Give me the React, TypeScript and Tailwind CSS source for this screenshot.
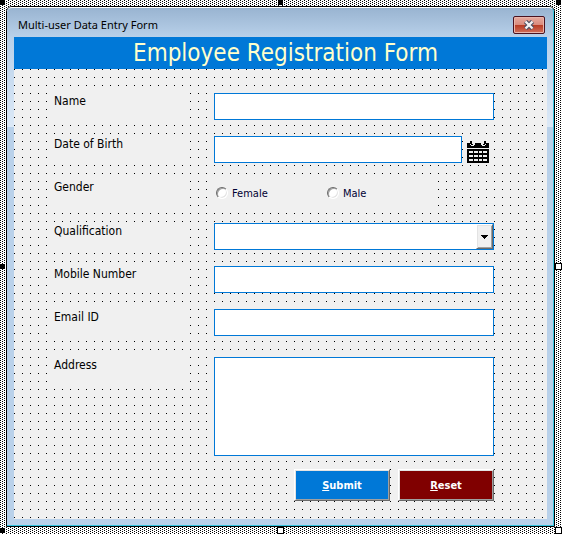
import { useState } from "react";
import type { ReactNode } from "react";

const fieldClass =
  "block w-full h-[27px] rounded-none border border-[#0078d7] bg-white px-1 text-xs text-black outline-none";

const hatchClass =
  "bg-white bg-[image:conic-gradient(at_1px_1px,transparent_270deg,#000_0),conic-gradient(at_1px_1px,transparent_270deg,#000_0)] bg-[size:4px_2px,4px_2px] bg-[position:0_0,2px_1px]";

const dotGridClass =
  "bg-[#f0f0f0] bg-[image:conic-gradient(at_1px_1px,transparent_270deg,#000_0)] bg-[size:8px_8px]";

const bevelClass =
  "border border-t-white border-l-white border-r-[#696969] border-b-[#696969] shadow-[inset_1px_1px_0_#e3e3e3,inset_-1px_-1px_0_#a0a0a0]";

function Label({ htmlFor, children }: { htmlFor: string; children: ReactNode }) {
  return (
    <label htmlFor={htmlFor} className="block h-[27px] bg-[#f0f0f0] text-xs leading-4 text-black">
      {children}
    </label>
  );
}

function CalendarIcon() {
  return (
    <svg width="22" height="22" viewBox="0 0 22 22" shapeRendering="crispEdges" aria-hidden="true">
      <path fill="#000" d="M0 2h22v5H0z" />
      <path fill="#f0f0f0" d="M3 1h5v3H7v1H4V4H3zM14 1h5v3h-1v1h-3V4h-1z" />
      <path fill="#000" d="M3 0h2v3h1v1H4V3H3zM17 0h2v3h-1v1h-2V3h1z" />
      <path
        fill="#000"
        fillRule="evenodd"
        d="M0 8h22v14H0zM2 10v2h4v-2zM7 10v2h4v-2zM12 10v2h3v-2zM16 10v2h4v-2zM2 14v2h4v-2zM7 14v2h4v-2zM12 14v2h3v-2zM16 14v2h4v-2zM2 18v2h4v-2zM7 18v2h4v-2zM12 18v2h3v-2zM16 18v2h4v-2z"
      />
    </svg>
  );
}

function Radio({ label, value, checked, onChange }: {
  label: string;
  value: string;
  checked: boolean;
  onChange: (v: string) => void;
}) {
  return (
    <label className="flex w-28 items-center gap-1 text-[11px] leading-4 text-[#000033]">
      <input
        type="radio"
        name="gender"
        value={value}
        checked={checked}
        onChange={() => onChange(value)}
        className="mb-0.5 size-3 appearance-none rounded-full border border-t-[#696969] border-l-[#696969] border-r-white border-b-white bg-white shadow-[inset_1px_1px_0_#a0a0a0,inset_-1px_-1px_0_#e3e3e3] checked:bg-black"
      />
      {label}
    </label>
  );
}

// sizing handles around the form, filled = locked, hollow = draggable
function Handles() {
  const filled = "absolute size-[5px] bg-black";
  const hollow = "absolute size-[7px] border border-black bg-white";
  return (
    <>
      <span className={`${filled} top-0 left-0`} />
      <span className={`${filled} top-0 left-1/2 -ml-[3px]`} />
      <span className={`${filled} top-0 right-px`} />
      <span className={`${filled} top-1/2 left-0 -mt-[3px]`} />
      <span className={`${filled} bottom-px left-0`} />
      <span className={`${hollow} top-1/2 right-0 -mt-1`} />
      <span className={`${hollow} bottom-0 left-1/2 -ml-1`} />
      <span className={`${hollow} right-0 bottom-0`} />
    </>
  );
}

export default function App() {
  const [gender, setGender] = useState("");

  return (
    <div className="bg-white pr-[3px] font-['DejaVu_Sans_Condensed','DejaVu_Sans',sans-serif]">
      <div className={`relative pt-1.5 pr-[7px] pb-[7px] pl-1.5 ${hatchClass}`}>
        <Handles />

        <div className="rounded-t-md border border-black bg-[#b9d1ea]">
          <div className="rounded-t-[5px] border-t border-r border-b border-t-white border-r-[#35c5e0] border-b-[#35c5e0] bg-[linear-gradient(#99b4d1,#b9d1ea_30px,#dce9f7_119px,#b9d1ea_119px)] pr-1.5 pb-[6px] pl-[7px]">
            <header className="flex h-[29px] items-center justify-between pl-1">
              <span className="pt-1.5 font-['Noto_Sans',sans-serif] text-[11px] text-black">
                Multi-user Data Entry Form
              </span>
              <button
                type="button"
                aria-label="Close"
                className="mt-1 mr-0.5 flex h-[18px] w-8 items-center justify-center rounded-xs border border-[#4a1220] bg-[linear-gradient(#e6aa9f,#d98a7c_50%,#b83a22_50%,#d0705c)] shadow-[inset_0_0_0_1px_#e9b5ab]"
              >
                <svg width="12" height="10" viewBox="0 0 12 10" aria-hidden="true">
                  <path d="M2.5 1.5l7 7M9.5 1.5l-7 7" stroke="#4b4f63" strokeWidth="4.5" fill="none" />
                  <path d="M2.5 1.5l7 7M9.5 1.5l-7 7" stroke="#f4f4f4" strokeWidth="2.4" fill="none" />
                </svg>
              </button>
            </header>

            <h1 className="h-8 bg-[#0078d7] pl-2.5 text-center text-2xl leading-8 text-[#ffffcc]">
              Employee Registration Form
            </h1>

            <form
              onSubmit={(e) => e.preventDefault()}
              onReset={() => setGender("")}
              className={`pt-6 pr-[53px] pb-[18px] pl-10 ${dotGridClass}`}
            >
              <div className="grid grid-cols-[136px_1fr] gap-x-6 gap-y-4">
                <Label htmlFor="name">Name</Label>
                <input id="name" type="text" className={fieldClass} />

                <Label htmlFor="dob">Date of Birth</Label>
                <div className="flex items-end gap-[5px] pr-[5px]">
                  <input id="dob" type="text" className={fieldClass} />
                  <button type="button" aria-label="Pick a date" className="shrink-0 bg-[#f0f0f0]">
                    <CalendarIcon />
                  </button>
                </div>

                <Label htmlFor="gender">Gender</Label>
                <div id="gender" role="radiogroup" aria-label="Gender" className="flex h-7 w-56 items-center bg-[#f0f0f0] pt-0.5 pl-0.5">
                  <Radio label="Female" value="female" checked={gender === "female"} onChange={setGender} />
                  <Radio label="Male" value="male" checked={gender === "male"} onChange={setGender} />
                </div>

                <Label htmlFor="qualification">Qualification</Label>
                <div className="relative">
                  <select id="qualification" defaultValue="" className={`${fieldClass} appearance-none`}>
                    <option value=""></option>
                  </select>
                  <span className={`pointer-events-none absolute inset-y-px right-px flex w-[17px] items-center justify-center bg-[#f0f0f0] ${bevelClass}`}>
                    <svg width="7" height="4" viewBox="0 0 7 4" shapeRendering="crispEdges" aria-hidden="true">
                      <path d="M0 0h7v1H6v1H5v1H4v1H3V3H2V2H1V1H0z" />
                    </svg>
                  </span>
                </div>

                <Label htmlFor="mobile">Mobile Number</Label>
                <input id="mobile" type="text" className={fieldClass} />

                <Label htmlFor="email">Email ID</Label>
                <input id="email" type="text" className={fieldClass} />
              </div>

              <div className="mt-[21px] grid grid-cols-[136px_1fr] gap-x-6">
                <Label htmlFor="address">Address</Label>
                <textarea
                  id="address"
                  className="block h-[99px] w-full resize-none border border-[#0078d7] bg-white px-1 text-xs outline-none"
                />
              </div>

              <div className="mt-[13px] flex justify-end gap-2">
                <button type="submit" className={`h-8 w-24 bg-[#0078d7] pt-0.5 text-[11px] font-bold text-white ${bevelClass}`}>
                  <span className="underline">S</span>ubmit
                </button>
                <button type="reset" className={`h-8 w-24 bg-[#800000] pt-0.5 text-[11px] font-bold text-white ${bevelClass}`}>
                  <span className="underline">R</span>eset
                </button>
              </div>
            </form>
          </div>
        </div>
      </div>
    </div>
  );
}
